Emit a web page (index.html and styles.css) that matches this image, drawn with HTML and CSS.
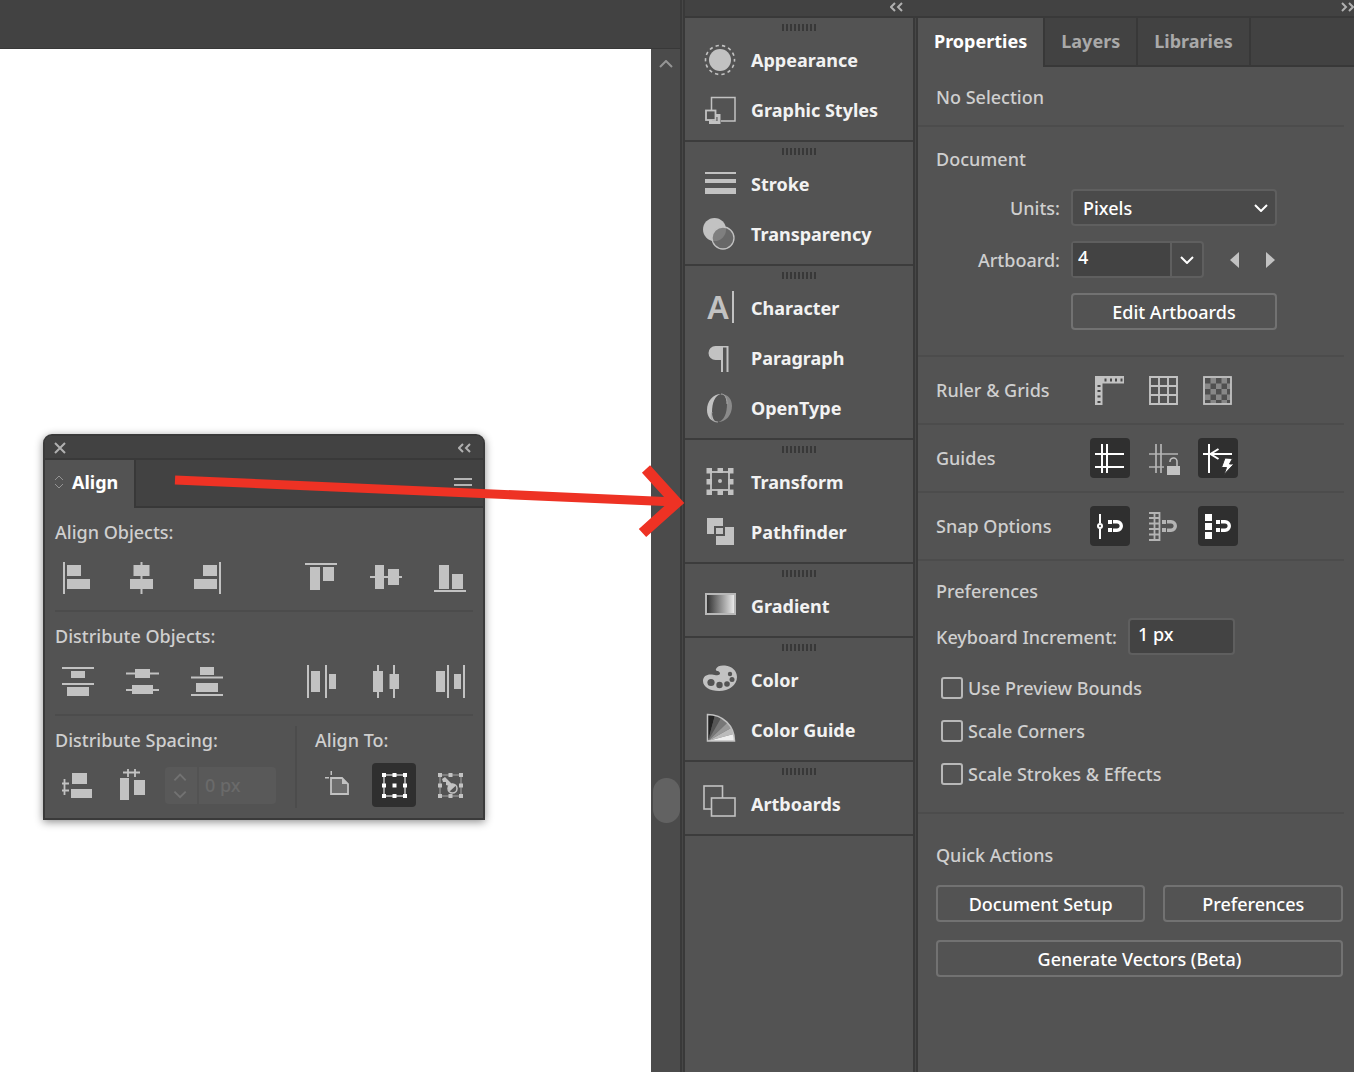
FILE: index.html
```html
<!DOCTYPE html>
<html lang="en">
<head>
    <meta charset="UTF-8">
    <meta name="viewport" content="width=device-width, initial-scale=1.0">
    <title>Align Panel</title>
    <link rel="stylesheet" href="styles.css">
</head>
<body>

<div class="app">
    <main class="workspace">
        <div class="workspace-bar"></div>
        <div class="workspace-body">
            <div class="canvas"></div>
            <div class="scrollbar">
                <svg class="line-icon" width="14" height="8" viewBox="0 0 14 8"><path d="M1 7L7 1L13 7"/></svg>
                <div class="scroll-thumb"></div>
            </div>
        </div>
    </main>

    <div class="gutter"></div>

    <aside class="side">
        <div class="side-bar">
            <button class="collapse dock-collapse" aria-label="Collapse dock">
                <svg class="line-icon" width="13" height="10" viewBox="0 0 13 10"><path d="M5 1L1 5L5 9M12 1L8 5L12 9"/></svg>
            </button>
            <button class="collapse" aria-label="Collapse properties">
                <svg class="line-icon" width="13" height="10" viewBox="0 0 13 10"><path d="M1 1L5 5L1 9M8 1L12 5L8 9"/></svg>
            </button>
        </div>

        <div class="side-body">
            <nav class="dock">
                <div class="dock-group">
                    <div class="grip"></div>
                    <button class="dock-item">
                        <svg width="40" height="40" viewBox="0 0 40 40"><circle cx="20" cy="20" r="11" fill="#c2c2c2"/><circle cx="20" cy="20" r="14.5" fill="none" stroke="#c2c2c2" stroke-width="1.6" stroke-dasharray="3.3 3.2" stroke-dashoffset="1.6"/></svg>
                        Appearance
                    </button>
                    <button class="dock-item">
                        <svg width="40" height="40" viewBox="0 0 40 40"><path d="M11.5 20V7.500H35V31H21" fill="none" stroke="#c2c2c2" stroke-width="1.5"/><path d="M15 25.500H19V32.500H10.500V29" fill="none" stroke="#c2c2c2" stroke-width="3"/><rect x="6" y="20.500" width="9.500" height="9.500" fill="#535353" stroke="#c2c2c2" stroke-width="1.800"/></svg>
                        Graphic Styles
                    </button>
                </div>
                <div class="dock-group">
                    <div class="grip"></div>
                    <button class="dock-item">
                        <svg width="40" height="40" viewBox="0 0 40 40" fill="#c2c2c2"><rect x="5" y="8" width="31" height="2"/><rect x="5" y="15" width="31" height="4"/><rect x="5" y="24" width="31" height="6"/></svg>
                        Stroke
                    </button>
                    <button class="dock-item">
                        <svg width="40" height="40" viewBox="0 0 40 40"><circle cx="14.500" cy="15.500" r="11.500" fill="#c2c2c2"/><circle cx="23" cy="24" r="11" fill="#6e6e6e" fill-opacity=".8" stroke="#c2c2c2" stroke-width="1.300"/></svg>
                        Transparency
                    </button>
                </div>
                <div class="dock-group">
                    <div class="grip"></div>
                    <button class="dock-item">
                        <svg class="letter-icon" width="40" height="40" viewBox="0 0 40 40" fill="#c2c2c2"><text x="18" y="31" text-anchor="middle">A</text><rect x="32" y="3" width="2" height="32"/></svg>
                        Character
                    </button>
                    <button class="dock-item">
                        <svg width="40" height="40" viewBox="0 0 40 40" fill="#c2c2c2"><path d="M15.500 8H28.500V34H26.500V9.500H23V34H21V22H15.500A7 7 0 0 1 15.500 8Z"/></svg>
                        Paragraph
                    </button>
                    <button class="dock-item">
                        <svg width="40" height="40" viewBox="0 0 40 40"><path d="M21 6C13 6 7 13 7 22C7 29 11 34 18 34C14 34 12 30 12 24C12 15 15 7 21 6Z" fill="#c2c2c2"/><path d="M21 6C28 6 32 11 32 18C32 27 26 34 18 34C24 33 27 25 27 16C27 10 25 6 21 6Z" fill="#8a8a8a"/><path d="M18 34C12 34 10 30 12 24M21 6C25 6 27 10 27 16" fill="none" stroke="#a8a8a8"/></svg>
                        OpenType
                    </button>
                </div>
                <div class="dock-group">
                    <div class="grip"></div>
                    <button class="dock-item">
                        <svg width="40" height="40" viewBox="0 0 40 40" fill="#c2c2c2"><rect x="11" y="10" width="18" height="18" fill="none" stroke="#c2c2c2" stroke-width="1.800"/><path d="M6.500 6h5.500v5.500H6.500zM17.500 6h5.500v5.500h-5.500zM28 6h5.500v5.500H28zM6.500 17h5.500v5.500H6.500zM28 17h5.500v5.500H28zM6.500 27.500h5.500v5.500H6.500zM17.500 27.500h5.500v5.500h-5.500zM28 27.500h5.500v5.500H28z"/><rect x="12" y="11" width="16" height="16" fill="#535353"/><circle cx="20" cy="19" r="2"/></svg>
                        Transform
                    </button>
                    <button class="dock-item">
                        <svg width="40" height="40" viewBox="0 0 40 40"><path d="M7 6H23V14H14V22H7ZM25 15H34V33H16V24H25Z" fill="#c2c2c2"/><rect x="16" y="16" width="7" height="6" fill="#c2c2c2"/></svg>
                        Pathfinder
                    </button>
                </div>
                <div class="dock-group">
                    <div class="grip"></div>
                    <button class="dock-item">
                        <svg width="40" height="40" viewBox="0 0 40 40"><defs><linearGradient id="ramp"><stop offset="0" stop-color="#2c2c2c"/><stop offset="1" stop-color="#f0f0f0"/></linearGradient></defs><rect x="6" y="8" width="29" height="20" fill="url(#ramp)" stroke="#b8b8b8" stroke-width="2"/></svg>
                        Gradient
                    </button>
                </div>
                <div class="dock-group">
                    <div class="grip"></div>
                    <button class="dock-item">
                        <svg width="40" height="40" viewBox="0 0 40 40"><path d="M16 9C17 6 21 5 25 5.500C32 6 37 11 37 17C37 25 29 31 19 31C10 31 3 27 3 21C3 16 7 14 12 14.500C15 15 18 16 19.500 14.500C21 13 19 11 17 11C16 10.500 15.500 10 16 9Z" fill="#c2c2c2"/><g fill="#535353"><circle cx="11" cy="22.500" r="3.600"/><circle cx="19.500" cy="25" r="3.200"/><circle cx="27" cy="24" r="2.800"/><circle cx="32" cy="19.500" r="2.500"/><circle cx="30" cy="14" r="2.200"/></g></svg>
                        Color
                    </button>
                    <button class="dock-item">
                        <svg width="40" height="40" viewBox="0 0 40 40"><path d="M8 31V4L15 5Z" fill="#222"/><path d="M8 31L15 5L21 8Z" fill="#555"/><path d="M8 31L21 8L27 13Z" fill="#777"/><path d="M8 31L27 13L31 18Z" fill="#999"/><path d="M8 31L31 18L33.500 24Z" fill="#bbb"/><path d="M8 31L33.500 24L34.500 31Z" fill="#eee"/><path d="M7.500 4.500V31H34.500C34.500 16 23 4.500 7.500 4.500Z" fill="none" stroke="#c2c2c2" stroke-width="1.500"/></svg>
                        Color Guide
                    </button>
                </div>
                <div class="dock-group">
                    <div class="grip"></div>
                    <button class="dock-item">
                        <svg width="40" height="40" viewBox="0 0 40 40" stroke="#c2c2c2" stroke-width="1.600"><rect x="4" y="2" width="18.500" height="23" fill="#535353"/><rect x="11.500" y="14" width="23.500" height="18" fill="#535353"/></svg>
                        Artboards
                    </button>
                </div>
            </nav>

            <div class="gutter"></div>

            <section class="properties">
                <div class="tabs">
                    <button class="tab active">Properties</button>
                    <button class="tab">Layers</button>
                    <button class="tab">Libraries</button>
                </div>

                <div class="section selection">No Selection</div>

                <div class="section document">
                    <h2>Document</h2>
                    <div class="form-grid">
                        <label for="units">Units:</label>
                        <div class="select-wrap">
                            <select id="units"><option>Pixels</option></select>
                            <svg class="line-icon bright" width="14" height="8" viewBox="0 0 14 8"><path d="M1 1L7 7L13 1"/></svg>
                        </div>
                        <label for="artboard">Artboard:</label>
                        <div class="artboard-row">
                            <div class="combo">
                                <input type="text" id="artboard" class="field" value="4">
                                <button class="combo-btn" aria-label="Choose artboard">
                                    <svg class="line-icon bright" width="14" height="8" viewBox="0 0 14 8"><path d="M1 1L7 7L13 1"/></svg>
                                </button>
                            </div>
                            <button class="step" aria-label="Previous artboard"><svg width="9" height="16" viewBox="0 0 9 16"><path d="M9 0V16L0 8Z" fill="#c2c2c2"/></svg></button>
                            <button class="step" aria-label="Next artboard"><svg width="9" height="16" viewBox="0 0 9 16"><path d="M0 0V16L9 8Z" fill="#c2c2c2"/></svg></button>
                        </div>
                        <button class="btn edit-artboards">Edit Artboards</button>
                    </div>
                </div>

                <div class="section toggle-row">
                    <h2>Ruler &amp; Grids</h2>
                    <div class="toggles">
                        <button class="toggle" aria-label="Show rulers">
                            <svg width="40" height="40" viewBox="0 0 40 40"><path d="M5 6H34V13.500H12.500V35H5Z" fill="#c2c2c2"/><path d="M14.500 8.500h2v3h-2zM20 8.500h2v3h-2zM25 8.500h2v3h-2zM30.500 8.500h2v3h-2zM7.500 15h3v2h-3zM7.500 20h3v2h-3zM7.500 25.500h3v2h-3zM7.500 31h3v2h-3z" fill="#484848"/></svg>
                        </button>
                        <button class="toggle" aria-label="Show grid">
                            <svg width="40" height="40" viewBox="0 0 40 40"><path d="M6 7H33V34H6ZM15 7V34M24 7V34M6 16H33M6 25H33" fill="none" stroke="#c2c2c2" stroke-width="1.900"/></svg>
                        </button>
                        <button class="toggle" aria-label="Show transparency grid">
                            <svg width="40" height="40" viewBox="0 0 40 40"><defs><pattern id="checks" x="7" y="8" width="11" height="11" patternUnits="userSpaceOnUse"><path d="M5.500 0h5.500v5.500H5.500zM0 5.500h5.500v5.500H0z" fill="#878787"/></pattern></defs><rect x="6" y="7" width="27" height="27" fill="#505050"/><rect x="6" y="7" width="27" height="27" fill="url(#checks)" stroke="#c2c2c2" stroke-width="1.800"/></svg>
                        </button>
                    </div>
                </div>

                <div class="section toggle-row">
                    <h2>Guides</h2>
                    <div class="toggles">
                        <button class="toggle on" aria-label="Show guides">
                            <svg width="40" height="40" viewBox="0 0 40 40" stroke="#fff" stroke-width="2"><path d="M5 16H34M5 29H34M12 6V35M17 6V35"/></svg>
                        </button>
                        <button class="toggle" aria-label="Lock guides">
                            <svg width="40" height="40" viewBox="0 0 40 40"><path d="M5 16H34M5 29H20M12 6V35M17 6V35" stroke="#b4b4b4" stroke-width="1.700"/><rect x="23" y="28" width="13" height="9" fill="#c2c2c2"/><path d="M33 28V24A3.500 3.500 0 0 0 26 23V24" fill="none" stroke="#c2c2c2" stroke-width="1.500"/></svg>
                        </button>
                        <button class="toggle on" aria-label="Smart guides">
                            <svg width="40" height="40" viewBox="0 0 40 40"><path d="M5 16H34M11 6V35M20.500 11L12.500 16L20.500 21" fill="none" stroke="#fff" stroke-width="2"/><path d="M27 20L34.500 20.500L31.500 26H36L26 36.500L28.500 29.500H23.500Z" fill="#fff" stroke="#2f2f2f"/></svg>
                        </button>
                    </div>
                </div>

                <div class="section toggle-row">
                    <h2>Snap Options</h2>
                    <div class="toggles">
                        <button class="toggle on" aria-label="Snap to point">
                            <svg width="40" height="40" viewBox="0 0 40 40" fill="#fff"><path d="M9 8h2v9H9zM9 23h2v10H9z"/><circle cx="10" cy="20" r="2" fill="none" stroke="#fff" stroke-width="2"/><path d="M18 14h4v4h-4zM18 22h4v4h-4z"/><path d="M23 15.700H27A4.300 4.300 0 0 1 27 24.300H23" fill="none" stroke="#fff" stroke-width="3.400"/></svg>
                        </button>
                        <button class="toggle" aria-label="Snap to grid">
                            <svg width="40" height="40" viewBox="0 0 40 40" fill="#b4b4b4"><path d="M5 7H15.500V34H5M10.500 7V34M5 12H15.500M5 17.500H15.500M5 23H15.500M5 28.500H15.500" fill="none" stroke="#b4b4b4" stroke-width="1.800"/><path d="M18 14h4v4h-4zM18 22h4v4h-4z"/><path d="M23 15.700H27A4.300 4.300 0 0 1 27 24.300H23" fill="none" stroke="#b4b4b4" stroke-width="3.400"/></svg>
                        </button>
                        <button class="toggle on" aria-label="Snap to pixel">
                            <svg width="40" height="40" viewBox="0 0 40 40" fill="#fff"><path d="M7 8h7v7H7zM7 17h7v7H7zM7 26h7v7H7z"/><path d="M18 14h4v4h-4zM18 22h4v4h-4z"/><path d="M23 15.700H27A4.300 4.300 0 0 1 27 24.300H23" fill="none" stroke="#fff" stroke-width="3.400"/></svg>
                        </button>
                    </div>
                </div>

                <div class="section prefs">
                    <h2>Preferences</h2>
                    <div class="increment">
                        <label for="increment">Keyboard Increment:</label>
                        <input type="text" id="increment" class="field boxed" value="1 px">
                    </div>
                    <div class="checks">
                        <label class="check"><input type="checkbox">Use Preview Bounds</label>
                        <label class="check"><input type="checkbox">Scale Corners</label>
                        <label class="check"><input type="checkbox">Scale Strokes &amp; Effects</label>
                    </div>
                </div>

                <div class="section quick">
                    <h2>Quick Actions</h2>
                    <div class="quick-grid">
                        <button class="btn">Document Setup</button>
                        <button class="btn">Preferences</button>
                        <button class="btn wide">Generate Vectors (Beta)</button>
                    </div>
                </div>
            </section>
        </div>
    </aside>
</div>

<!-- Floating Align panel -->
<section class="float-panel">
    <div class="float-bar">
        <button class="collapse" aria-label="Close"><svg class="line-icon" width="12" height="12" viewBox="0 0 12 12"><path d="M1 1L11 11M11 1L1 11"/></svg></button>
        <button class="collapse" aria-label="Collapse"><svg class="line-icon" width="13" height="10" viewBox="0 0 13 10"><path d="M5 1L1 5L5 9M12 1L8 5L12 9"/></svg></button>
    </div>
    <div class="float-tabs">
        <button class="float-tab">
            <svg class="line-icon dim" width="10" height="14" viewBox="0 0 10 14"><path d="M1 5L5 1L9 5M1 9L5 13L9 9"/></svg>
            Align
        </button>
        <button class="menu-btn" aria-label="Panel menu"><svg width="18" height="8" viewBox="0 0 18 8" fill="#b4b4b4"><rect width="18" height="2"/><rect y="6" width="18" height="2"/></svg></button>
    </div>
    <div class="float-body">
        <div class="align-section">
            <h2>Align Objects:</h2>
            <div class="align-row">
                <div class="align-set">
                    <button class="tool" aria-label="Align left"><svg width="44" height="44" viewBox="0 0 44 44"><path d="M8 7h2v32H8zM12 10h14v11H12zM12 24h23v10H12z"/></svg></button>
                    <button class="tool" aria-label="Align center"><svg width="44" height="44" viewBox="0 0 44 44"><path d="M20.500 7h2v32h-2zM13.500 10h16v11h-16zM10 24h23v10H10z"/></svg></button>
                    <button class="tool" aria-label="Align right"><svg width="44" height="44" viewBox="0 0 44 44"><path d="M34 7h2v32h-2zM18 10h14v11H18zM9 24h23v10H9z"/></svg></button>
                </div>
                <div class="align-set">
                    <button class="tool" aria-label="Align top"><svg width="44" height="44" viewBox="0 0 44 44"><path d="M6 8h32v2H6zM11 12h10v23H11zM24 12h11v14H24z"/></svg></button>
                    <button class="tool" aria-label="Align middle"><svg width="44" height="44" viewBox="0 0 44 44"><path d="M6 21h32v2H6zM11 10h9v24h-9zM24 14h11v16H24z"/></svg></button>
                    <button class="tool" aria-label="Align bottom"><svg width="44" height="44" viewBox="0 0 44 44"><path d="M5 35h32v2H5zM10 10h10v24H10zM23 19h11v15H23z"/></svg></button>
                </div>
            </div>
        </div>
        <div class="align-section">
            <h2>Distribute Objects:</h2>
            <div class="align-row">
                <div class="align-set">
                    <button class="tool" aria-label="Distribute top"><svg width="44" height="44" viewBox="0 0 44 44"><path d="M7 8h32v2H7zM16 12h14v7H16zM7 24h32v2H7zM12 28h22v9H12z"/></svg></button>
                    <button class="tool" aria-label="Distribute middle"><svg width="44" height="44" viewBox="0 0 44 44"><path d="M6 13.500h33v2H6zM15 10h15v9H15zM6 30h33v2H6zM12 26h21v9H12z"/></svg></button>
                    <button class="tool" aria-label="Distribute bottom"><svg width="44" height="44" viewBox="0 0 44 44"><path d="M15 8h14v8H15zM6 17.500h32v2H6zM11 24h22v9H11zM6 35h32v2H6z"/></svg></button>
                </div>
                <div class="align-set">
                    <button class="tool" aria-label="Distribute left"><svg width="44" height="44" viewBox="0 0 44 44"><path d="M8 6h2v33H8zM12 12h9v21h-9zM26 6h2v33h-2zM30 15h7v15h-7z"/></svg></button>
                    <button class="tool" aria-label="Distribute center"><svg width="44" height="44" viewBox="0 0 44 44"><path d="M13 6h2v33h-2zM9 12h10v21H9zM29 6h2v33h-2zM25.500 15h9.500v15h-9.500z"/></svg></button>
                    <button class="tool" aria-label="Distribute right"><svg width="44" height="44" viewBox="0 0 44 44"><path d="M7 12h9v21H7zM18 6h2v33h-2zM25 15h7v15h-7zM34 6h2v33h-2z"/></svg></button>
                </div>
            </div>
        </div>
        <div class="align-bottom">
            <div class="align-section spacing">
                <h2>Distribute Spacing:</h2>
                <div class="align-set tight">
                    <button class="tool" aria-label="Vertical spacing"><svg width="44" height="44" viewBox="0 0 44 44"><path d="M17 10h15v11H17zM16 26h21v9H16z"/><path d="M9.500 16V32M7 20.500H14M7 27.500H14" stroke="#c2c2c2" stroke-width="1.800"/></svg></button>
                    <button class="tool" aria-label="Horizontal spacing"><svg width="44" height="44" viewBox="0 0 44 44"><path d="M10 15h9v22h-9zM24 17h11v15H24z"/><path d="M13 9.500H30M18 6V14M25 6V14" stroke="#c2c2c2" stroke-width="1.800"/></svg></button>
                    <div class="spinner">
                        <svg class="line-icon" width="34" height="37" viewBox="0 0 34 37"><path d="M10 13L16 7L22 13M10 25L16 31L22 25"/></svg>
                        <input type="text" aria-label="Spacing" value="0 px" disabled>
                    </div>
                </div>
            </div>
            <div class="align-section align-to">
                <h2>Align To:</h2>
                <div class="align-set tight">
                    <button class="tool" aria-label="Artboard"><svg width="44" height="44" viewBox="0 0 44 44"><path d="M16 15H27L33 21V31H16Z" fill="#6e6e6e" stroke="#c2c2c2" stroke-width="1.800"/><path d="M27 14.500L33.500 21H27ZM15.500 8h1.500v4h-1.500zM10 14h4v1.500h-4z"/></svg></button>
                    <button class="tool on" aria-label="Selection"><svg width="44" height="44" viewBox="0 0 44 44"><rect x="12" y="12" width="21" height="21" fill="none" stroke="#c2c2c2" stroke-width="1.500"/><path d="M10 10h4v4h-4zM20.500 10h4v4h-4zM31 10h4v4h-4zM10 20.500h4v4h-4zM20.500 20.500h4v4h-4zM31 20.500h4v4h-4zM10 31h4v4h-4zM20.500 31h4v4h-4zM31 31h4v4h-4z" fill="#fff"/></svg></button>
                    <button class="tool" aria-label="Key object"><svg width="44" height="44" viewBox="0 0 44 44"><rect x="11" y="12" width="21" height="21" fill="none" stroke="#8a8a8a" stroke-width="1.500"/><path d="M9 10h4v4h-4zM19.500 10h4v4h-4zM30 10h4v4h-4zM9 20.500h4v4h-4zM30 20.500h4v4h-4zM9 31h4v4h-4zM19.500 31h4v4h-4zM30 31h4v4h-4z"/><path d="M13 16L16 14L23 21L20 23L17 22L17 19L14 19Z"/><circle cx="23.500" cy="25.500" r="4.500" fill="#535353" stroke="#c2c2c2" stroke-width="1.500"/><path d="M19 25.500A4.500 4.500 0 0 1 27 22.500L20.500 28.500Z"/></svg></button>
                </div>
            </div>
        </div>
    </div>
</section>

<svg class="arrow" width="520" height="80" viewBox="0 0 520 80">
    <path d="M5 15L506 37" stroke-width="9"/>
    <path d="M476 4L506.500 37.500L472.500 68" stroke-width="11"/>
</svg>

</body>
</html>
```

FILE: styles.css
```css
* {
    box-sizing: border-box;
}

body {
    margin: 0;
    font-family: "Noto Sans", "Open Sans", sans-serif;
    font-size: 18px;
    font-weight: 500;
    line-height: 24px;
    color: #cfcfcf;
    background-color: #535353;
    overflow: hidden;
}

button,
input,
select {
    font: inherit;
    color: inherit;
    margin: 0;
    padding: 0;
    border: none;
    border-radius: 0;
    background: none;
}

svg {
    display: block;
    flex-shrink: 0;
}

h2 {
    margin: 0;
    font-size: 18px;
    font-weight: 500;
}

.line-icon {
    fill: none;
    stroke: #b0b0b0;
    stroke-width: 2;
}

.line-icon.bright {
    stroke: #ffffff;
}

.line-icon.dim {
    stroke: #949494;
    stroke-width: 1;
}

.app {
    display: flex;
    height: 100vh;
}

/* Canvas */
.workspace {
    flex: 1;
    display: flex;
    flex-direction: column;
}

.workspace-bar {
    height: 49px;
    background: #424242;
    border-bottom: 1px solid #383838;
}

.workspace-body {
    flex: 1;
    display: flex;
}

.canvas {
    flex: 1;
    background: #ffffff;
}

.scrollbar {
    position: relative;
    width: 29px;
    padding: 11px 8px;
    background: #4b4b4b;
}

.scrollbar .line-icon {
    stroke: #959595;
}

.scroll-thumb {
    position: absolute;
    top: 729px;
    right: 0;
    width: 27px;
    height: 45px;
    border-radius: 14px;
    background: #626262;
}

.gutter {
    width: 5px;
    background: #474747;
    border-left: 2px solid #393939;
    border-right: 2px solid #393939;
}

/* Right side */
.side {
    display: flex;
    flex-direction: column;
}

.side-bar {
    display: flex;
    justify-content: space-between;
    height: 18px;
    padding-bottom: 2px;
    background: #424242;
    border-bottom: 2px solid #393939;
}

.collapse {
    display: flex;
    align-items: center;
}

.dock-collapse {
    width: 228px;
    justify-content: flex-end;
    padding-right: 10px;
}

.side-body {
    flex: 1;
    display: flex;
}

.dock {
    width: 228px;
}

.dock-group {
    padding: 6px 0 5px;
    border-bottom: 2px solid #3c3c3c;
}

.grip {
    width: 35px;
    height: 7px;
    margin: 0 auto 4px;
    background: repeating-linear-gradient(to right, #383838 0 2px, #535353 2px 4px);
}

.dock-item {
    display: flex;
    align-items: center;
    gap: 11px;
    width: 100%;
    height: 50px;
    padding-left: 15px;
    font-weight: bold;
    color: #f2f2f2;
}

.letter-icon {
    overflow: visible;
    font-size: 32px;
    line-height: 40px;
    font-weight: 600;
}

/* Properties */
.properties {
    width: 436px;
}

.tabs {
    display: flex;
    height: 49px;
    background: linear-gradient(#424242 47px, #383838 47px);
}

.tab {
    padding: 0 16px 4px;
    border-right: 2px solid #383838;
    font-weight: bold;
    color: #a9a9a9;
    background: linear-gradient(#424242 47px, #383838 47px);
}

.tab.active {
    background: #535353;
    color: #ffffff;
}

.section {
    margin-right: 10px;
    padding-left: 18px;
    border-bottom: 2px solid #4c4c4c;
}

.selection {
    padding-top: 18px;
    padding-bottom: 16px;
}

.document {
    padding-top: 20px;
    padding-bottom: 25px;
}

.form-grid {
    display: grid;
    grid-template-columns: 124px 206px;
    gap: 15px 11px;
    margin-top: 18px;
    align-items: center;
}

.form-grid label {
    text-align: right;
}

.select-wrap {
    position: relative;
}

.select-wrap select {
    display: block;
    width: 100%;
    height: 37px;
    padding-left: 10px;
    appearance: none;
    border: 2px solid #5f5f5f;
    border-radius: 4px;
    background: #4a4a4a;
    color: #ffffff;
}

.select-wrap svg {
    position: absolute;
    right: 9px;
    top: 15px;
    pointer-events: none;
}

.artboard-row {
    display: flex;
    align-items: center;
    justify-content: space-between;
}

.combo {
    display: flex;
    width: 133px;
    height: 37px;
    border: 2px solid #5f5f5f;
    border-radius: 4px;
    background: #4a4a4a;
}

.field {
    flex: 1;
    min-width: 0;
    padding: 0 5px 5px;
    background: #434343;
    color: #ffffff;
}

.field.boxed {
    flex: none;
    width: 107px;
    height: 37px;
    padding-left: 8px;
    border: 2px solid #5f5f5f;
    border-radius: 4px;
}

.combo-btn {
    display: flex;
    align-items: center;
    justify-content: center;
    width: 32px;
    border-left: 2px solid #5f5f5f;
}

.step {
    padding: 0 2px;
}

.btn {
    height: 37px;
    border: 2px solid #727272;
    border-radius: 4px;
    color: #ffffff;
}

.edit-artboards {
    grid-column: 2;
}

.toggle-row {
    display: flex;
    align-items: center;
    height: 68px;
}

.toggle-row h2 {
    width: 154px;
}

.toggles {
    display: flex;
    gap: 14px;
}

.toggle {
    width: 40px;
    height: 40px;
    border-radius: 4px;
}

.on {
    background: #2f2f2f;
}

.prefs {
    padding-top: 18px;
    padding-bottom: 26px;
}

.increment {
    display: flex;
    align-items: center;
    gap: 11px;
    margin-top: 15px;
}

.checks {
    display: flex;
    flex-direction: column;
    gap: 19px;
    margin: 21px 0 0 5px;
}

.check {
    display: flex;
    align-items: center;
    gap: 5px;
}

.check input {
    width: 22px;
    height: 22px;
    appearance: none;
    border: 2px solid #b8b8b8;
    border-radius: 3px;
}

.quick {
    padding-top: 29px;
    border-bottom: none;
}

.quick-grid {
    display: grid;
    grid-template-columns: 7fr 6fr;
    gap: 18px;
    margin: 18px 1px 0 0;
}

.wide {
    grid-column: 1 / -1;
}

/* Floating panel */
.float-panel {
    position: absolute;
    left: 43px;
    top: 434px;
    width: 442px;
    border: 2px solid #3a3a3a;
    border-radius: 9px 9px 0 0;
    background: #535353;
    box-shadow: 0 2px 9px rgba(0, 0, 0, 0.45);
    overflow: hidden;
}

.float-bar {
    display: flex;
    justify-content: space-between;
    height: 24px;
    padding: 2px 12px 0 9px;
    background: #424242;
    border-bottom: 2px solid #393939;
}

.float-tabs {
    display: flex;
    justify-content: space-between;
    height: 48px;
    background: linear-gradient(#424242 46px, #383838 46px);
}

.float-tab {
    display: flex;
    align-items: center;
    gap: 8px;
    padding: 0 16px 5px 9px;
    border-right: 2px solid #383838;
    background: #535353;
    font-weight: bold;
    color: #ffffff;
}

.menu-btn {
    padding: 0 11px 5px;
}

.float-body {
    padding: 0 10px;
}

.align-section {
    padding: 12px 0 11px;
    border-bottom: 2px solid #4c4c4c;
}

.align-row {
    display: flex;
    justify-content: space-between;
}

.align-set {
    display: flex;
    align-items: center;
    gap: 21px;
    margin-top: 11px;
}

.align-set.tight {
    gap: 13px;
}

.spacing .align-set.tight {
    gap: 11px;
}

.tool {
    width: 44px;
    height: 44px;
    border-radius: 4px;
    fill: #c2c2c2;
}

.align-bottom {
    display: flex;
}

.align-bottom .align-section {
    border-bottom: none;
}

.spacing {
    flex: 1;
    background: linear-gradient(#4c4c4c, #4c4c4c) right center / 2px 82px no-repeat;
}

.align-to {
    padding-left: 18px;
}

.spinner {
    display: flex;
    width: 111px;
    height: 37px;
    border-radius: 4px;
    background: #595959;
}

.spinner svg {
    stroke: #727272;
    border-right: 2px solid #535353;
}

.spinner input {
    min-width: 0;
    flex: 1;
    padding: 0 6px;
    color: #6a6a6a;
}

/* Arrow pointing from the panel to the dock */
.arrow {
    position: absolute;
    left: 170px;
    top: 465px;
    fill: none;
    stroke: #ee3224;
    pointer-events: none;
}
```
